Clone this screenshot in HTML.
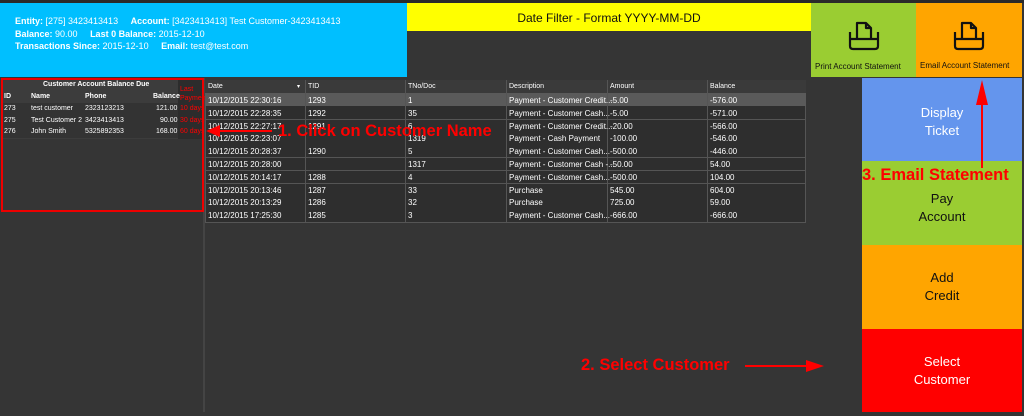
<!DOCTYPE html>
<html><head><style>
*{margin:0;padding:0;box-sizing:border-box}
body{width:1024px;height:416px;background:#353535;position:relative;overflow:hidden;font-family:"Liberation Sans",sans-serif;color:#fff}
.a{position:absolute}
.t{font-size:8px;white-space:nowrap;position:absolute}
.btn{position:absolute;display:flex;align-items:center;justify-content:center;text-align:center;font-size:13px;line-height:18px}
.ann{position:absolute;color:#f00;font-weight:bold;font-size:16.5px;white-space:nowrap}
</style></head><body>
<div class="a" style="left:0;top:0;width:1024px;height:3px;background:#2a2a2a"></div>
<div class="a" style="left:0;top:3px;width:407px;height:74px;background:#00bfff"></div>
<div class="a" style="left:15px;top:15px;font-size:9px;line-height:12.5px;color:#fff;white-space:nowrap">
<b>Entity:</b> [275] 3423413413 &nbsp;&nbsp;&nbsp; <b>Account:</b> [3423413413] Test Customer-3423413413<br>
<b>Balance:</b> 90.00 &nbsp;&nbsp;&nbsp; <b>Last 0 Balance:</b> 2015-12-10<br>
<b>Transactions Since:</b> 2015-12-10 &nbsp;&nbsp;&nbsp; <b>Email:</b> test@test.com</div>
<div class="a" style="left:407px;top:3px;width:404px;height:28px;background:#ffff00;color:#111;font-size:12px;text-align:center;line-height:30px">Date Filter - Format YYYY-MM-DD</div>
<div class="a" style="left:811px;top:3px;width:105px;height:74px;background:#9acd32"></div>
<div class="a" style="left:916px;top:3px;width:106px;height:74px;background:#ffa500"></div>
<svg class="a" style="left:847px;top:20px" width="34" height="32" viewBox="0 0 34 32" fill="none" stroke="#111" stroke-width="2.2" stroke-linejoin="round"><path d="M3 12v14q0 3 3 3h22q3 0 3-3V12"/><path d="M10 19V3h9l5 5v11"/><path d="M19 3v5h5"/><path d="M3 19h28"/></svg>
<svg class="a" style="left:952px;top:20px" width="34" height="32" viewBox="0 0 34 32" fill="none" stroke="#111" stroke-width="2.2" stroke-linejoin="round"><path d="M3 12v14q0 3 3 3h22q3 0 3-3V12"/><path d="M10 19V3h9l5 5v11"/><path d="M19 3v5h5"/><path d="M3 19h28"/></svg>
<div class="t" style="left:815px;top:62px;color:#111">Print Account Statement</div>
<div class="t" style="left:920px;top:61px;color:#111">Email Account Statement</div>

<div class="btn" style="left:862px;top:78px;width:160px;height:83px;background:#6495ed;padding-top:4px">Display<br>Ticket</div>
<div class="btn" style="left:862px;top:161px;width:160px;height:84px;background:#9acd32;color:#111;padding-top:10px">Pay<br>Account</div>
<div class="btn" style="left:862px;top:245px;width:160px;height:84px;background:#ffa500;color:#111">Add<br>Credit</div>
<div class="btn" style="left:862px;top:329px;width:160px;height:83px;background:#f00">Select<br>Customer</div>

<div class="a" style="left:2px;top:79px;width:201px;height:60px;background:#3c3c3c"></div>
<div class="a" style="left:178px;top:79px;width:25px;height:60px;background:#2c2c2c"></div>
<div class="a" style="left:203px;top:78px;width:2px;height:334px;background:#444"></div>
<div class="t" style="left:43px;top:81px;font-weight:bold;font-size:7px">Customer Account Balance Due</div>
<div class="t" style="left:4px;top:93px;font-weight:bold;font-size:7px">ID</div>
<div class="t" style="left:31px;top:93px;font-weight:bold;font-size:7px">Name</div>
<div class="t" style="left:85px;top:93px;font-weight:bold;font-size:7px">Phone</div>
<div class="t" style="left:153px;top:93px;font-weight:bold;font-size:7px">Balance</div>
<div class="t" style="left:180px;top:85px;color:#f00;font-size:7px;line-height:9px">Last<br>Payment</div>
<div class="a" style="left:2px;top:103px;width:176px;height:35px;background:#333"></div>
<div class="t" style="left:4px;top:105px;font-size:7px">273</div><div class="t" style="left:31px;top:105px;font-size:7px">test customer</div><div class="t" style="left:85px;top:105px;font-size:7px">2323123213</div><div class="t" style="left:156px;top:105px;font-size:7px">121.00</div><div class="t" style="left:180px;top:105px;font-size:7px;color:#f00">10 days</div>
<div class="t" style="left:4px;top:117px;font-size:7px">275</div><div class="t" style="left:31px;top:117px;font-size:7px">Test Customer 2</div><div class="t" style="left:85px;top:117px;font-size:7px">3423413413</div><div class="t" style="left:160px;top:117px;font-size:7px">90.00</div><div class="t" style="left:180px;top:117px;font-size:7px;color:#f00">30 days</div>
<div class="t" style="left:4px;top:128px;font-size:7px">276</div><div class="t" style="left:31px;top:128px;font-size:7px">John Smith</div><div class="t" style="left:85px;top:128px;font-size:7px">5325892353</div><div class="t" style="left:156px;top:128px;font-size:7px">168.00</div><div class="t" style="left:180px;top:128px;font-size:7px;color:#f00">60 days</div>
<div class="a" style="left:1px;top:78px;width:203px;height:134px;border:2px solid #e00"></div>

<div class="a" style="left:205px;top:80px;width:601px;height:143px;background:#2e2e2e;border:1px solid #555"></div>
<div class="a" style="left:205px;top:80px;width:601px;height:13px;background:#3a3a3a"></div>
<div class="a" style="left:205px;top:93px;width:601px;height:13px;background:#5a5a5a"></div>
<div class="a" style="left:305px;top:80px;width:1px;height:143px;background:#555"></div>
<div class="a" style="left:405px;top:80px;width:1px;height:143px;background:#555"></div>
<div class="a" style="left:506px;top:80px;width:1px;height:143px;background:#555"></div>
<div class="a" style="left:607px;top:80px;width:1px;height:143px;background:#555"></div>
<div class="a" style="left:707px;top:80px;width:1px;height:143px;background:#555"></div>
<div class="a" style="left:205px;top:119px;width:601px;height:1px;background:#555"></div>
<div class="a" style="left:205px;top:157px;width:601px;height:1px;background:#555"></div>
<div class="a" style="left:205px;top:170px;width:601px;height:1px;background:#555"></div>
<div class="a" style="left:205px;top:183px;width:601px;height:1px;background:#555"></div>
<div style="position:absolute;left:0;top:0">
<div class="t" style="left:208px;top:83px;font-size:7px">Date</div><div class="t" style="left:297px;top:83px;font-size:6px">▾</div>
<div class="t" style="left:308px;top:83px;font-size:7px">TID</div><div class="t" style="left:408px;top:83px;font-size:7px">TNo/Doc</div><div class="t" style="left:509px;top:83px;font-size:7px">Description</div><div class="t" style="left:610px;top:83px;font-size:7px">Amount</div><div class="t" style="left:710px;top:83px;font-size:7px">Balance</div>
</div>
<div style="position:absolute;left:0;top:96px;font-size:7px">
<div class="t" style="left:208px;top:0">10/12/2015 22:30:16</div><div class="t" style="left:308px;top:0">1293</div><div class="t" style="left:408px;top:0">1</div><div class="t" style="left:509px;top:0">Payment - Customer Credit...</div><div class="t" style="left:610px;top:0">-5.00</div><div class="t" style="left:710px;top:0">-576.00</div>
<div class="t" style="left:208px;top:13px">10/12/2015 22:28:35</div><div class="t" style="left:308px;top:13px">1292</div><div class="t" style="left:408px;top:13px">35</div><div class="t" style="left:509px;top:13px">Payment - Customer Cash...</div><div class="t" style="left:610px;top:13px">-5.00</div><div class="t" style="left:710px;top:13px">-571.00</div>
<div class="t" style="left:208px;top:26px">10/12/2015 22:27:17</div><div class="t" style="left:308px;top:26px">1291</div><div class="t" style="left:408px;top:26px">6</div><div class="t" style="left:509px;top:26px">Payment - Customer Credit...</div><div class="t" style="left:610px;top:26px">-20.00</div><div class="t" style="left:710px;top:26px">-566.00</div>
<div class="t" style="left:208px;top:38px">10/12/2015 22:23:07</div><div class="t" style="left:408px;top:38px">1319</div><div class="t" style="left:509px;top:38px">Payment - Cash Payment</div><div class="t" style="left:610px;top:38px">-100.00</div><div class="t" style="left:710px;top:38px">-546.00</div>
<div class="t" style="left:208px;top:51px">10/12/2015 20:28:37</div><div class="t" style="left:308px;top:51px">1290</div><div class="t" style="left:408px;top:51px">5</div><div class="t" style="left:509px;top:51px">Payment - Customer Cash...</div><div class="t" style="left:610px;top:51px">-500.00</div><div class="t" style="left:710px;top:51px">-446.00</div>
<div class="t" style="left:208px;top:64px">10/12/2015 20:28:00</div><div class="t" style="left:408px;top:64px">1317</div><div class="t" style="left:509px;top:64px">Payment - Customer Cash -...</div><div class="t" style="left:610px;top:64px">-50.00</div><div class="t" style="left:710px;top:64px">54.00</div>
<div class="t" style="left:208px;top:77px">10/12/2015 20:14:17</div><div class="t" style="left:308px;top:77px">1288</div><div class="t" style="left:408px;top:77px">4</div><div class="t" style="left:509px;top:77px">Payment - Customer Cash...</div><div class="t" style="left:610px;top:77px">-500.00</div><div class="t" style="left:710px;top:77px">104.00</div>
<div class="t" style="left:208px;top:90px">10/12/2015 20:13:46</div><div class="t" style="left:308px;top:90px">1287</div><div class="t" style="left:408px;top:90px">33</div><div class="t" style="left:509px;top:90px">Purchase</div><div class="t" style="left:610px;top:90px">545.00</div><div class="t" style="left:710px;top:90px">604.00</div>
<div class="t" style="left:208px;top:102px">10/12/2015 20:13:29</div><div class="t" style="left:308px;top:102px">1286</div><div class="t" style="left:408px;top:102px">32</div><div class="t" style="left:509px;top:102px">Purchase</div><div class="t" style="left:610px;top:102px">725.00</div><div class="t" style="left:710px;top:102px">59.00</div>
<div class="t" style="left:208px;top:115px">10/12/2015 17:25:30</div><div class="t" style="left:308px;top:115px">1285</div><div class="t" style="left:408px;top:115px">3</div><div class="t" style="left:509px;top:115px">Payment - Customer Cash...</div><div class="t" style="left:610px;top:115px">-666.00</div><div class="t" style="left:710px;top:115px">-666.00</div>
</div>

<svg class="a" style="left:0;top:0" width="1024" height="416">
<path d="M272 131H215" stroke="#f00" stroke-width="2"/><path d="M206 131l14-6v12z" fill="#f00"/>
<path d="M745 366H810" stroke="#f00" stroke-width="2"/><path d="M824 366l-18-6v12z" fill="#f00"/>
<path d="M982 168V95" stroke="#f00" stroke-width="2"/><path d="M982 80l-6 25h12z" fill="#f00"/>
</svg>
<div class="ann" style="left:278px;top:122px">1. Click on Customer Name</div>
<div class="ann" style="left:581px;top:356px">2. Select Customer</div>
<div class="ann" style="left:862px;top:166px">3. Email Statement</div>
</body></html>
